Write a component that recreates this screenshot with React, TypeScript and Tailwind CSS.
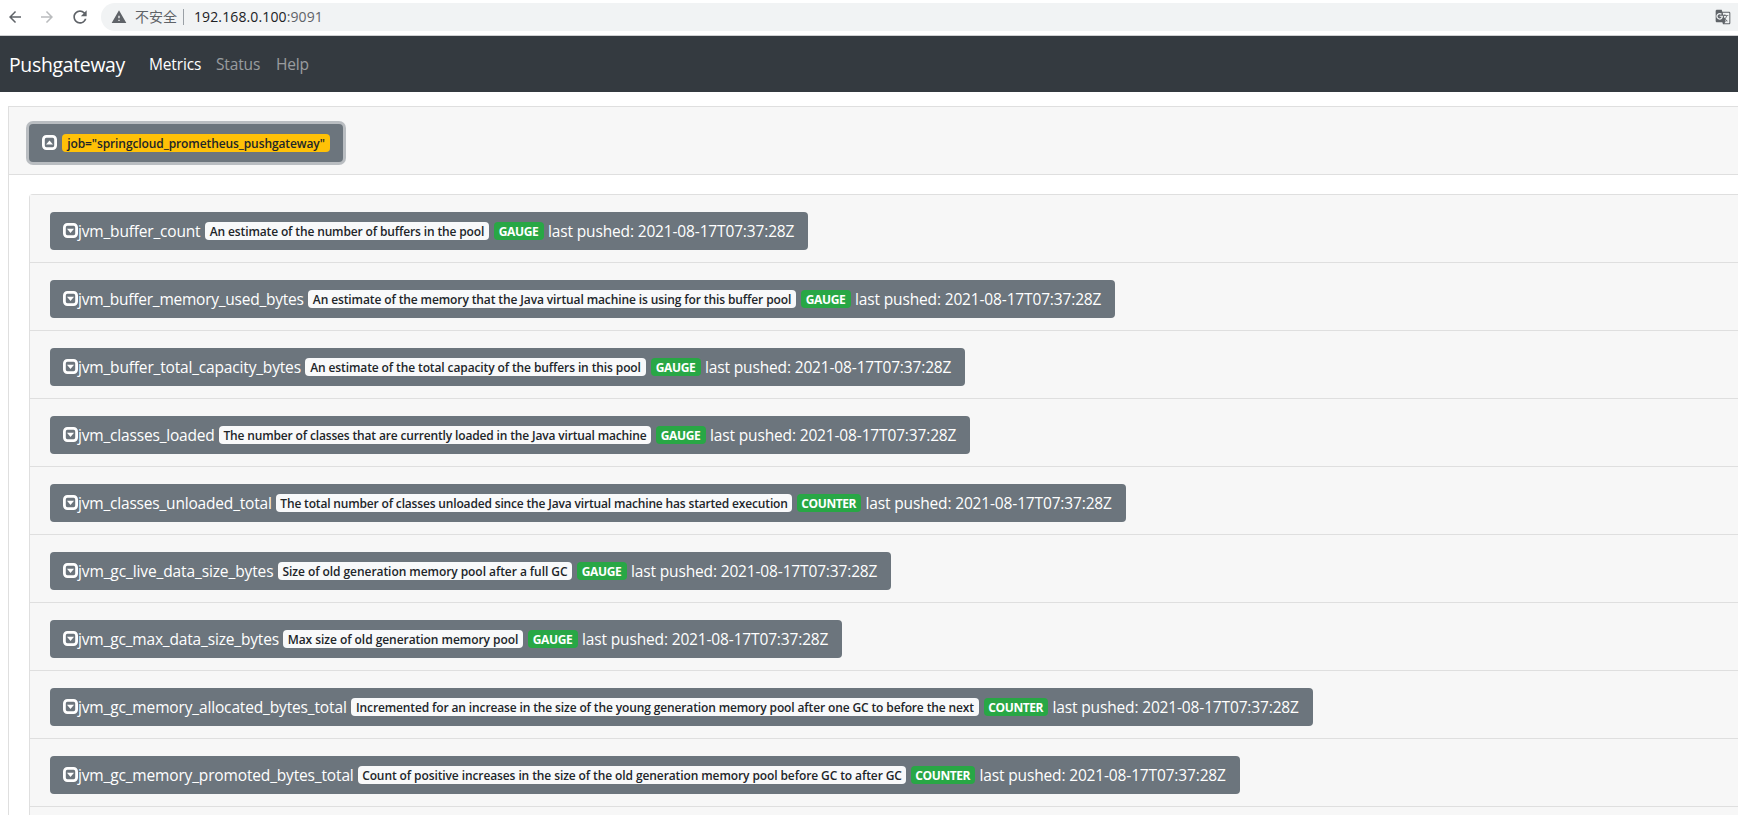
import React from 'react';
import { MdArrowBack, MdArrowForward, MdGTranslate, MdRefresh, MdWarning } from 'react-icons/md';

type Metric = {
  name: string;
  nameClass: string;
  help: string;
  helpClass: string;
  kind: 'GAUGE' | 'COUNTER';
};

const metrics: Metric[] = [
  {
    name: 'jvm_buffer_count',
    nameClass: 'w-[127px] tracking-[-0.18px]',
    help: 'An estimate of the number of buffers in the pool',
    helpClass: 'w-[284px] tracking-[-0.135px]',
    kind: 'GAUGE',
  },
  {
    name: 'jvm_buffer_memory_used_bytes',
    nameClass: 'w-[230px] tracking-[-0.24px]',
    help: 'An estimate of the memory that the Java virtual machine is using for this buffer pool',
    helpClass: 'w-[488px] tracking-[-0.11px]',
    kind: 'GAUGE',
  },
  {
    name: 'jvm_buffer_total_capacity_bytes',
    nameClass: 'w-[227px] tracking-[-0.17px]',
    help: 'An estimate of the total capacity of the buffers in this pool',
    helpClass: 'w-[341px] tracking-[-0.11px]',
    kind: 'GAUGE',
  },
  {
    name: 'jvm_classes_loaded',
    nameClass: 'w-[141px] tracking-[-0.18px]',
    help: 'The number of classes that are currently loaded in the Java virtual machine',
    helpClass: 'w-[432px] tracking-[-0.155px]',
    kind: 'GAUGE',
  },
  {
    name: 'jvm_classes_unloaded_total',
    nameClass: 'w-[198px] tracking-[-0.19px]',
    help: 'The total number of classes unloaded since the Java virtual machine has started execution',
    helpClass: 'w-[516px] tracking-[-0.165px]',
    kind: 'COUNTER',
  },
  {
    name: 'jvm_gc_live_data_size_bytes',
    nameClass: 'w-[200px] tracking-[-0.11px]',
    help: 'Size of old generation memory pool after a full GC',
    helpClass: 'w-[294px] tracking-[-0.06px]',
    kind: 'GAUGE',
  },
  {
    name: 'jvm_gc_max_data_size_bytes',
    nameClass: 'w-[205px] tracking-[-0.165px]',
    help: 'Max size of old generation memory pool',
    helpClass: 'w-[240px] tracking-[-0.05px]',
    kind: 'GAUGE',
  },
  {
    name: 'jvm_gc_memory_allocated_bytes_total',
    nameClass: 'w-[273px] tracking-[-0.15px]',
    help: 'Incremented for an increase in the size of the young generation memory pool after one GC to before the next',
    helpClass: 'w-[628px] tracking-[-0.13px]',
    kind: 'COUNTER',
  },
  {
    name: 'jvm_gc_memory_promoted_bytes_total',
    nameClass: 'w-[280px] tracking-[-0.156px]',
    help: 'Count of positive increases in the size of the old generation memory pool before GC to after GC',
    helpClass: 'w-[548px] tracking-[-0.1px]',
    kind: 'COUNTER',
  },
];

function ToggleIcon({ up = false }: { up?: boolean }) {
  return (
    <svg width="16" height="16" viewBox="0 0 16 16" className="shrink-0">
      <rect x="2.4" y="1.4" width="12.2" height="12.2" rx="3" fill="none" stroke="#fff" strokeWidth="2.8" />
      <path d={up ? 'M5 9.6 8.5 5.4 12 9.6Z' : 'M5 5.8h7L8.5 10Z'} fill="#fff" />
    </svg>
  );
}

function BrowserBar() {
  return (
    <div className="flex h-9 items-start border-b border-[#cfd0d2] bg-white pl-1.5 pt-[3px]">
      <div className="flex h-7 w-[95px] items-center gap-[14px] text-[18px]">
        <MdArrowBack className="shrink-0 text-[#5f6368]" />
        <MdArrowForward className="shrink-0 text-[#babcbe]" />
        <MdRefresh className="mb-px size-5 shrink-0 text-[#5f6368]" />
      </div>
      <div className="flex h-7 flex-1 items-center rounded-l-full bg-[#f1f3f4] pl-[10px] pr-[7px] text-[14px] text-[#5f6368]">
        <MdWarning className="mb-px size-4" />
        <span className="ml-[8px] w-[48px] pb-[2px] font-['Noto_Sans_CJK_SC',sans-serif] text-[14px] leading-5">不安全</span>
        <span className="h-4 w-px bg-[#9aa0a6]" />
        <span className="ml-[10px] flex-1 pb-[2px] tracking-[0.12px]">
          <span className="text-[#202124]">192.168.0.100</span>:9091
        </span>
        <MdGTranslate className="size-4" />
      </div>
    </div>
  );
}

function NavBar() {
  return (
    <nav className="flex h-14 items-center bg-[#343a40] pl-[9px] pt-[2px]">
      <a className="w-[140px] text-[19.4px] tracking-[-0.3px] text-white">Pushgateway</a>
      <a className="w-[67px] text-[15.5px] tracking-[-0.15px] text-white">Metrics</a>
      <a className="w-[60px] text-[15.5px] tracking-[-0.15px] text-white/50">Status</a>
      <a className="text-[15.5px] tracking-[-0.15px] text-white/50">Help</a>
    </nav>
  );
}

function MetricRow({ metric }: { metric: Metric }) {
  return (
    <div className="flex h-[68px] items-start border-b border-[#dfdfdf] bg-[#f7f7f7] pl-5 pt-[17px]">
      <button className="flex h-[38px] items-center whitespace-nowrap rounded bg-[#6c757d] px-3 text-left text-[15.5px] text-white">
        <ToggleIcon />
        <span className={`pt-[2px] ${metric.nameClass}`}>{metric.name}</span>
        <span className={`h-[18px] rounded bg-[#f8f9fa] text-center text-[12px] font-semibold leading-[20px] text-[#212529] ${metric.helpClass}`}>
          {metric.help}
        </span>
        <span
          className={`ml-[4.5px] h-[18px] rounded bg-[#28a745] text-center text-[12px] font-bold leading-[20px] ${
            metric.kind === 'GAUGE' ? 'w-[50px] tracking-[-0.35px]' : 'w-[64.5px] tracking-[-0.4px]'
          }`}
        >
          {metric.kind}
        </span>
        <span className="ml-[4.5px] w-[248px] pt-[2px] tracking-[-0.15px]">last pushed: 2021-08-17T07:37:28Z</span>
      </button>
    </div>
  );
}

export default function App() {
  return (
    <div className="h-[815px] w-full overflow-hidden bg-white font-['Open_Sans',sans-serif]">
      <BrowserBar />
      <NavBar />
      <main className="ml-2 mt-[14px] border-l border-t border-[#dfdfdf]">
        <div className="flex h-[68px] items-start border-b border-[#dfdfdf] bg-[#f7f7f7] pl-5 pt-[17px]">
          <button className="flex h-[38px] w-[314px] items-center rounded bg-[#6c757d] pl-3 ring-3 ring-[#b9bdc1]">
            <ToggleIcon up />
            <span className="ml-[5px] h-[18px] w-[268px] rounded bg-[#ffc107] text-center text-[12px] font-semibold leading-[20px] tracking-[-0.1px] text-[#212529]">
              job="springcloud_prometheus_pushgateway"
            </span>
          </button>
        </div>
        <div className="ml-5 mt-[19px] rounded-tl border-l border-t border-[#dfdfdf]">
          {metrics.map((m) => (
            <MetricRow key={m.name} metric={m} />
          ))}
          <div className="h-5 bg-[#f7f7f7]" />
        </div>
      </main>
    </div>
  );
}
